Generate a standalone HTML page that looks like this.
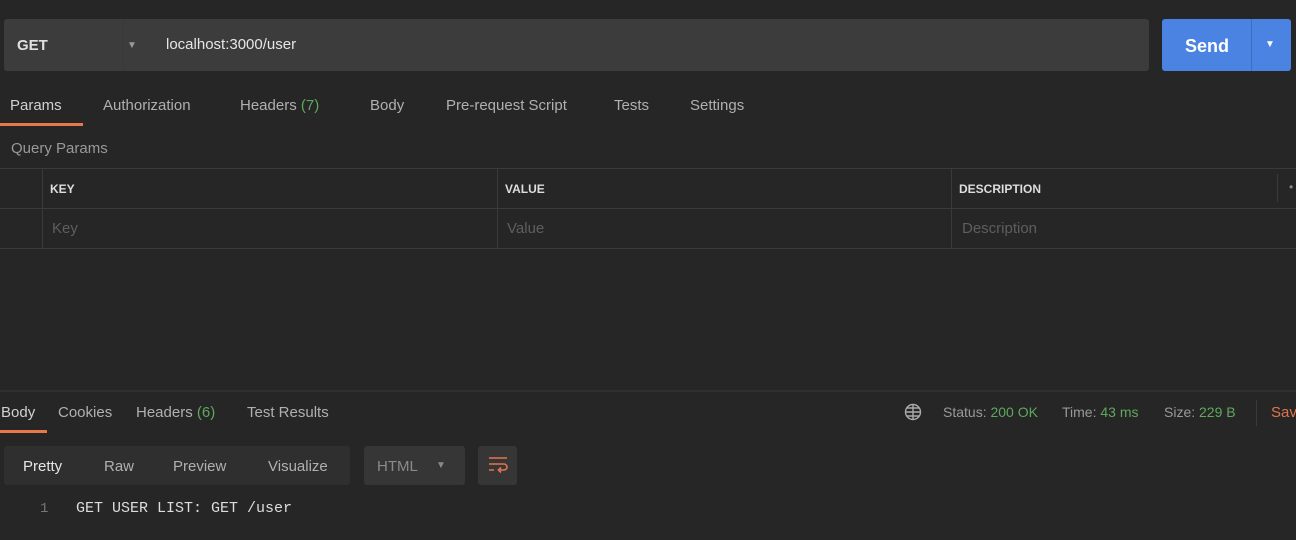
<!DOCTYPE html>
<html><head><style>
*{margin:0;padding:0;box-sizing:border-box}
body{width:1296px;height:540px;background:#262626;font-family:"Liberation Sans",sans-serif;color:#d0d0d0;position:relative;overflow:hidden;font-size:15px}
.a{position:absolute;white-space:nowrap}
.g{color:#5fa85f}
.m{color:#8a8a8a}
</style></head><body>
<div class="a" style="left:4px;top:19px;width:1145px;height:52px;background:#3c3c3c;border-radius:3px"></div>
<div class="a" style="left:123px;top:19px;width:1px;height:52px;background:#383838"></div>
<div class="a" style="left:17px;top:37px;font-weight:bold;color:#e0e0e0;font-size:15px">GET</div>
<div class="a" style="left:127px;top:40px;font-size:10px;color:#999">▼</div>
<div class="a" style="left:166px;top:36px;color:#e6e6e6;font-size:15px">localhost:3000/user</div>
<div class="a" style="left:1162px;top:19px;width:129px;height:52px;background:#4a83e2;border-radius:3px"></div>
<div class="a" style="left:1251px;top:19px;width:1px;height:52px;background:#3c6ec4"></div>
<div class="a" style="left:1185px;top:36px;color:#fff;font-size:18px;font-weight:bold">Send</div>
<div class="a" style="left:1265px;top:39px;color:#fff;font-size:10px">▼</div>

<div class="a" style="left:10px;top:97px">Params</div>
<div class="a" style="left:0;top:123px;width:83px;height:3px;background:#e8774a"></div>
<div class="a" style="left:103px;top:97px;color:#b0b0b0">Authorization</div>
<div class="a" style="left:240px;top:97px;color:#b0b0b0">Headers <span class="g">(7)</span></div>
<div class="a" style="left:370px;top:97px;color:#b0b0b0">Body</div>
<div class="a" style="left:446px;top:97px;color:#b0b0b0">Pre-request Script</div>
<div class="a" style="left:614px;top:97px;color:#b0b0b0">Tests</div>
<div class="a" style="left:690px;top:97px;color:#b0b0b0">Settings</div>
<div class="a" style="left:11px;top:140px;color:#999">Query Params</div>

<div class="a" style="left:0;top:168px;width:1296px;height:1px;background:#3a3a3a"></div>
<div class="a" style="left:0;top:208px;width:1296px;height:1px;background:#3a3a3a"></div>
<div class="a" style="left:0;top:248px;width:1296px;height:1px;background:#3a3a3a"></div>
<div class="a" style="left:42px;top:168px;width:1px;height:80px;background:#3a3a3a"></div>
<div class="a" style="left:497px;top:168px;width:1px;height:80px;background:#3a3a3a"></div>
<div class="a" style="left:951px;top:168px;width:1px;height:80px;background:#3a3a3a"></div>
<div class="a" style="left:1277px;top:174px;width:1px;height:28px;background:#3a3a3a"></div>
<div class="a" style="left:50px;top:182px;font-size:12px;font-weight:bold;color:#ddd">KEY</div>
<div class="a" style="left:505px;top:182px;font-size:12px;font-weight:bold;color:#ddd">VALUE</div>
<div class="a" style="left:959px;top:182px;font-size:12px;font-weight:bold;color:#ddd">DESCRIPTION</div>
<div class="a" style="left:1289px;top:180px;color:#888;font-size:12px">•</div>
<div class="a" style="left:52px;top:220px;color:#5e5e5e">Key</div>
<div class="a" style="left:507px;top:220px;color:#5e5e5e">Value</div>
<div class="a" style="left:962px;top:220px;color:#5e5e5e">Description</div>

<div class="a" style="left:0;top:390px;width:1296px;height:2px;background:#2f2f2f"></div>
<div class="a" style="left:1px;top:404px">Body</div>
<div class="a" style="left:0;top:430px;width:47px;height:3px;background:#e8774a"></div>
<div class="a" style="left:58px;top:404px;color:#b0b0b0">Cookies</div>
<div class="a" style="left:136px;top:404px;color:#b0b0b0">Headers <span class="g">(6)</span></div>
<div class="a" style="left:247px;top:404px;color:#b0b0b0">Test Results</div>
<svg class="a" style="left:904px;top:403px" width="18" height="18" viewBox="0 0 18 18" fill="none" stroke="#aaa" stroke-width="1.4"><circle cx="9" cy="9" r="7.5"/><path d="M1.5 9h15M9 1.5v15M3 5h12M3 13h12"/></svg>
<div class="a" style="left:943px;top:404px;font-size:14px;color:#999">Status: <span class="g">200 OK</span></div>
<div class="a" style="left:1062px;top:404px;font-size:14px;color:#999">Time: <span class="g">43 ms</span></div>
<div class="a" style="left:1164px;top:404px;font-size:14px;color:#999">Size: <span class="g">229 B</span></div>
<div class="a" style="left:1256px;top:400px;width:1px;height:26px;background:#3a3a3a"></div>
<div class="a" style="left:1271px;top:404px;color:#e0754b">Save</div>

<div class="a" style="left:4px;top:446px;width:346px;height:39px;background:#2f2f2f;border-radius:3px"></div>
<div class="a" style="left:23px;top:458px;color:#e6e6e6">Pretty</div>
<div class="a" style="left:104px;top:458px;color:#b0b0b0">Raw</div>
<div class="a" style="left:173px;top:458px;color:#b0b0b0">Preview</div>
<div class="a" style="left:268px;top:458px;color:#b0b0b0">Visualize</div>
<div class="a" style="left:364px;top:446px;width:101px;height:39px;background:#363636;border-radius:3px"></div>
<div class="a" style="left:377px;top:458px;color:#8a8a8a">HTML</div>
<div class="a" style="left:436px;top:460px;color:#8a8a8a;font-size:10px">▼</div>
<div class="a" style="left:478px;top:446px;width:39px;height:39px;background:#363636;border-radius:3px"></div>
<svg class="a" style="left:487px;top:455px" width="22" height="20" viewBox="0 0 22 20" fill="none" stroke="#e0754b" stroke-width="1.6"><path d="M2 3h18M2 9h15a3 3 0 0 1 0 6h-5M14 12.5l-2.5 2.5 2.5 2.5M2 15h5"/></svg>
<div class="a" style="left:40px;top:501px;font-family:'Liberation Mono',monospace;color:#777;font-size:14px">1</div>
<div class="a" style="left:76px;top:500px;font-family:'Liberation Mono',monospace;color:#ddd;font-size:15px">GET USER LIST: GET /user</div>
</body></html>
